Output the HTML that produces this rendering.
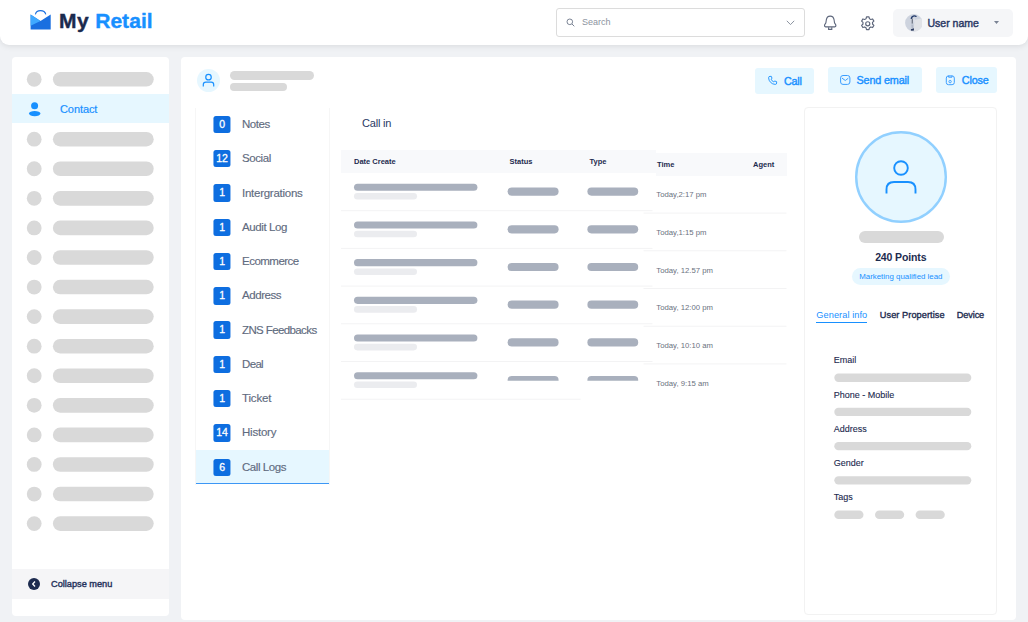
<!DOCTYPE html>
<html lang="en">
<head>
<meta charset="utf-8">
<title>My Retail</title>
<style>
*{box-sizing:border-box;margin:0;padding:0}
html,body{width:1028px;height:622px;overflow:hidden}
body{background:#f0f2f5;font-family:"Liberation Sans",sans-serif;color:#1d2b4f;position:relative}
.abs{position:absolute}
div,span,i,b{white-space:nowrap}
#hdr{position:absolute;left:0;top:0;width:1028px;height:45px;background:#fff;border-radius:0 0 9px 9px;box-shadow:0 1px 6px rgba(0,0,0,.1)}
#logo-txt{position:absolute;left:60px;top:8.5px;font-size:21px;font-weight:700;letter-spacing:.05px;-webkit-text-stroke:.4px currentColor;color:#1b2a4e;line-height:24px}
#logo-txt b{color:#1890ff}
#search{position:absolute;left:556px;top:8px;width:249px;height:29px;border:1px solid #dcdcdc;border-radius:3px;background:#fff}
#search span{position:absolute;left:25px;top:8.3px;font-size:9px;line-height:11px;color:#8c93a0}
#user{position:absolute;left:893px;top:8.5px;width:120px;height:28px;background:#f5f6f8;border-radius:5px}
#user span{position:absolute;left:34.5px;top:8.2px;font-size:10.5px;font-weight:400;-webkit-text-stroke:.45px currentColor;line-height:13px;color:#2d3b66}
#side{position:absolute;left:12px;top:57px;width:157px;height:559px;background:#fff;border-radius:4px;overflow:hidden}
.sc{position:absolute;left:15px;width:15px;height:15px;border-radius:50%;background:#d9d9d9}
.sb{position:absolute;left:41px;width:101px;height:15px;border-radius:8px;background:#d9d9d9}
#contact{position:absolute;left:0;top:37px;width:157px;height:29px;background:#e6f7ff}
#contact span{position:absolute;left:48px;top:8.6px;font-size:11px;line-height:13px;color:#1890ff;letter-spacing:-.08px;-webkit-text-stroke:.2px currentColor}
#collapse{position:absolute;left:0;top:512px;width:157px;height:30px;background:#f5f5f7}
#collapse span{position:absolute;left:39px;top:9.5px;font-size:9.2px;line-height:11px;color:#25335c;font-weight:400;-webkit-text-stroke:.4px currentColor}
#main{position:absolute;left:181px;top:57px;width:835px;height:563px;background:#fff;border-radius:4px}
.gb{position:absolute;background:#d9d9d9;border-radius:6px}
.btn{position:absolute;height:26px;background:#e6f7ff;border-radius:3px;color:#1890ff;font-size:10.8px;font-weight:400;-webkit-text-stroke:.4px currentColor;line-height:26px;letter-spacing:-.25px}
.btn span{position:absolute;top:0}
#tabs{position:absolute;left:15px;top:51px;width:133px;height:377px;box-shadow:-1px 0 0 #f6f6f6,1px 0 0 #f6f6f6}
.ti{position:absolute;left:0;width:133px;height:34px}
.ti i{position:absolute;left:17px;top:8.7px;width:17.3px;height:17.3px;transform:translate(.45px,0);background:#0e6ee0;border-radius:2.5px;color:#fff;font-style:normal;font-size:10.5px;line-height:17.5px;text-align:center;font-weight:400;-webkit-text-stroke:.3px #fff}
.ti span{position:absolute;left:46px;top:10.9px;font-size:11.5px;line-height:13px;color:#5f6b80;letter-spacing:-.3px;-webkit-text-stroke:.15px currentColor}
.ti.on{background:#e6f7ff;height:33.3px;box-shadow:0 1px 0 #3d97f5}
.th{position:absolute;background:#f8f9fb;height:23px}
.th span{position:absolute;top:7px;font-size:7.5px;line-height:9px;font-weight:700;color:#1d2b4f}
.ln{position:absolute;height:1px;background:#f4f4f5}
.d1{position:absolute;left:173px;width:124px;height:7px;border-radius:4px;background:#a9b0bd}
.d2{position:absolute;left:173px;width:63px;height:7px;border-radius:4px;background:#ebecef}
.p{position:absolute;width:51px;height:8px;border-radius:4px;background:#a9b0bd}
.tm{position:absolute;left:475.3px;font-size:7.75px;line-height:9px;color:#6b7280}
#rp{position:absolute;left:623.3px;top:50px;width:193px;height:508px;border:1px solid #f2f2f2;border-radius:4px;background:#fff}
.lb{position:absolute;left:28.5px;font-size:9px;line-height:11px;color:#1d2b4f;-webkit-text-stroke:.12px currentColor}
.rb{position:absolute;left:28.5px;width:137px;height:8.5px;border-radius:5px;background:#d9d9d9}
.rt{position:absolute;top:202px;font-size:9.2px;line-height:11px;font-weight:400;-webkit-text-stroke:.35px currentColor;color:#1d2b4f}
</style>
</head>
<body>
<div id="hdr">
<svg class="abs" style="left:30px;top:9px" width="22" height="22" viewBox="0 0 22 22"><path d="M0.6 5.6 L10.5 11.9 L20.7 5.6 L20.7 20.4 L0.6 20.4 Z" fill="#1a6fe0"/><path d="M0.6 5.6 L10.5 11.9 L0.6 16.8 Z" fill="#40a9ff"/><path d="M5.4 5.4 C6.5 0.4 14.5 0.4 15.8 5.4" fill="none" stroke="#1a6fe0" stroke-width="1.1"/></svg>
<div id="logo-txt"><span style="letter-spacing:.55px;margin-left:-1px">My</span> <b>Retail</b></div>
<div id="search">
<svg class="abs" style="left:9px;top:9px" width="9" height="9" viewBox="0 0 9 9"><circle cx="3.8" cy="3.8" r="2.8" fill="none" stroke="#7a8394" stroke-width="1"/><path d="M6 6 L8.3 8.3" stroke="#7a8394" stroke-width="1"/></svg>
<span>Search</span>
<svg class="abs" style="left:229px;top:11px" width="9" height="6" viewBox="0 0 9 6"><path d="M0.8 0.8 L4.5 4.6 L8.2 0.8" fill="none" stroke="#8c93a0" stroke-width="1"/></svg>
</div>
<svg class="abs" style="left:823px;top:14px" width="15" height="17" viewBox="0 0 15 17"><path d="M7.2 2.1 C3.8 2.1 3.5 4.6 3.3 6 L2.9 8.6 C2.7 9.7 1.5 10.2 1.5 11.4 C1.5 12.5 2.6 12.9 3.8 12.9 L10.6 12.9 C11.8 12.9 12.9 12.5 12.9 11.4 C12.9 10.2 11.7 9.7 11.5 8.6 L11.1 6 C10.9 4.6 10.6 2.1 7.2 2.1 Z" fill="none" stroke="#5d667b" stroke-width="1.1"/><path d="M5.6 13.2 L5.6 15.4 L8.8 15.4 L8.8 13.2" fill="none" stroke="#5d667b" stroke-width="1.1"/></svg>
<svg class="abs" style="left:859px;top:14.7px" width="17.5" height="17.5" viewBox="0 0 24 24"><path d="M10.3 2.5 h3.4 l.6 2.6 a7 7 0 0 1 1.9 1.1 l2.5-.8 1.7 3-1.9 1.8 a7 7 0 0 1 0 2.2 l1.9 1.8-1.7 3-2.5-.8 a7 7 0 0 1-1.9 1.1 l-.6 2.6 h-3.4 l-.6-2.6 a7 7 0 0 1-1.9-1.1 l-2.5.8-1.7-3 1.9-1.8 a7 7 0 0 1 0-2.2 l-1.9-1.8 1.7-3 2.5.8 a7 7 0 0 1 1.9-1.1 z" fill="none" stroke="#5d667b" stroke-width="1.6" stroke-linejoin="round"/><circle cx="12" cy="12" r="2.8" fill="none" stroke="#5d667b" stroke-width="1.6"/></svg>
<div id="user">
<svg class="abs" style="left:11.7px;top:5.6px" width="17.6" height="17.6" viewBox="0 0 17.6 17.6"><defs><clipPath id="av"><circle cx="8.8" cy="8.8" r="8.7"/></clipPath></defs><circle cx="8.8" cy="8.8" r="8.7" fill="#cdd3de"/><path clip-path="url(#av)" d="M9.5 6 L18 4 L18 18 L8.5 18 Z" fill="#e1e3e7"/><path d="M6.3 4.4 C6.8 2 9.5 1.3 11 2.3" fill="none" stroke="#233a6b" stroke-width="1.4" stroke-linecap="round"/><path d="M7.3 4.6 L7.2 9.6" stroke="#4b5160" stroke-width="0.9"/><path d="M7.8 5 L9.8 4.3 L10.2 7.5 L8.3 9 Z" fill="#dfe3ea" opacity=".7"/><path d="M5.8 15.2 L8.9 14.3 L9 16.6 L6.2 16.8 Z" fill="#2b3a5e"/><path d="M6.3 10.5 L8.2 10.5 L8.4 14 L6.6 14.3 Z" fill="#b3bac8"/></svg>
<span>User name</span>
<svg class="abs" style="left:100.5px;top:12.5px" width="5" height="3" viewBox="0 0 5 3"><path d="M0 0 L5 0 L2.5 3 Z" fill="#7a8394"/></svg>
</div>
</div>
<div id="side">
<svg class="abs" style="left:0;top:0" width="157" height="559" viewBox="12 57 157 559"><circle cx="34.2" cy="79.3" r="7.4" fill="#d9d9d9"/><rect x="52.9" y="72" width="100.8" height="14.6" rx="7.3" fill="#d9d9d9"/><circle cx="34.2" cy="139.2" r="7.4" fill="#d9d9d9"/><rect x="52.9" y="131.9" width="100.8" height="14.6" rx="7.3" fill="#d9d9d9"/><circle cx="34.2" cy="168.77" r="7.4" fill="#d9d9d9"/><rect x="52.9" y="161.47" width="100.8" height="14.6" rx="7.3" fill="#d9d9d9"/><circle cx="34.2" cy="198.34" r="7.4" fill="#d9d9d9"/><rect x="52.9" y="191.04" width="100.8" height="14.6" rx="7.3" fill="#d9d9d9"/><circle cx="34.2" cy="227.91" r="7.4" fill="#d9d9d9"/><rect x="52.9" y="220.61" width="100.8" height="14.6" rx="7.3" fill="#d9d9d9"/><circle cx="34.2" cy="257.48" r="7.4" fill="#d9d9d9"/><rect x="52.9" y="250.18" width="100.8" height="14.6" rx="7.3" fill="#d9d9d9"/><circle cx="34.2" cy="287.05" r="7.4" fill="#d9d9d9"/><rect x="52.9" y="279.75" width="100.8" height="14.6" rx="7.3" fill="#d9d9d9"/><circle cx="34.2" cy="316.62" r="7.4" fill="#d9d9d9"/><rect x="52.9" y="309.32" width="100.8" height="14.6" rx="7.3" fill="#d9d9d9"/><circle cx="34.2" cy="346.19" r="7.4" fill="#d9d9d9"/><rect x="52.9" y="338.89" width="100.8" height="14.6" rx="7.3" fill="#d9d9d9"/><circle cx="34.2" cy="375.76" r="7.4" fill="#d9d9d9"/><rect x="52.9" y="368.46" width="100.8" height="14.6" rx="7.3" fill="#d9d9d9"/><circle cx="34.2" cy="405.33" r="7.4" fill="#d9d9d9"/><rect x="52.9" y="398.03" width="100.8" height="14.6" rx="7.3" fill="#d9d9d9"/><circle cx="34.2" cy="434.9" r="7.4" fill="#d9d9d9"/><rect x="52.9" y="427.6" width="100.8" height="14.6" rx="7.3" fill="#d9d9d9"/><circle cx="34.2" cy="464.47" r="7.4" fill="#d9d9d9"/><rect x="52.9" y="457.17" width="100.8" height="14.6" rx="7.3" fill="#d9d9d9"/><circle cx="34.2" cy="494.04" r="7.4" fill="#d9d9d9"/><rect x="52.9" y="486.74" width="100.8" height="14.6" rx="7.3" fill="#d9d9d9"/><circle cx="34.2" cy="523.61" r="7.4" fill="#d9d9d9"/><rect x="52.9" y="516.31" width="100.8" height="14.6" rx="7.3" fill="#d9d9d9"/></svg>
<div id="contact">
<svg class="abs" style="left:15.7px;top:7.4px" width="14" height="16" viewBox="0 0 14 16"><circle cx="6.6" cy="4.8" r="3.5" fill="#1890ff"/><ellipse cx="6.7" cy="12.6" rx="5.7" ry="2.7" fill="#1890ff"/></svg>
<span>Contact</span></div>
<div id="collapse">
<svg class="abs" style="left:15.5px;top:9px" width="12" height="12" viewBox="0 0 12 12"><circle cx="6" cy="6" r="6" fill="#1d2b4f"/><path d="M7 3.5 L4.7 6 L7 8.5" fill="none" stroke="#fff" stroke-width="1.3"/></svg>
<span>Collapse menu</span></div>
</div>
<div id="main">
<svg class="abs" style="left:16px;top:11.5px" width="23" height="23" viewBox="0 0 23 23"><circle cx="11.5" cy="11.5" r="11.5" fill="#e6f7ff"/><circle cx="11.5" cy="8.2" r="2.75" fill="none" stroke="#1890ff" stroke-width="1.2"/><path d="M6.3 17.6 L6.3 15.6 Q6.3 13.2 8.8 13.2 L14.2 13.2 Q16.7 13.2 16.7 15.6 L16.7 17.6" fill="none" stroke="#1890ff" stroke-width="1.2"/></svg>
<div class="gb" style="left:49px;top:14.3px;width:84px;height:8.8px"></div>
<div class="gb" style="left:49px;top:25.9px;width:57px;height:8.3px"></div>
<div class="btn" style="left:574px;top:11px;width:59px">
<svg class="abs" style="left:12px;top:7px" width="11" height="11" viewBox="0 0 24 24"><path d="M6.5 3 L9.5 3 L11 7.5 L8.8 9.2 A12 12 0 0 0 14.8 15.2 L16.5 13 L21 14.5 L21 17.5 A3 3 0 0 1 18 20.5 A15 15 0 0 1 3.5 6 A3 3 0 0 1 6.5 3 Z" fill="none" stroke="#1890ff" stroke-width="2" stroke-linejoin="round"/></svg>
<span style="left:29px;top:-.5px">Call</span></div>
<div class="btn" style="left:647px;top:10px;width:94px">
<svg class="abs" style="left:12px;top:7px" width="11" height="12" viewBox="0 0 11 12"><rect x="0.6" y="1.5" width="9.3" height="8.9" rx="2.4" fill="none" stroke="#3a9dff" stroke-width="1"/><path d="M2 4.1 L5.3 6.5 L8.3 4.2" fill="none" stroke="#3a9dff" stroke-width="1"/></svg>
<span style="left:28.5px;top:.2px;letter-spacing:-.15px">Send email</span></div>
<div class="btn" style="left:755px;top:10px;width:61px">
<svg class="abs" style="left:9px;top:7px" width="11" height="12" viewBox="0 0 11 12"><rect x="1.3" y="1.9" width="8" height="8.8" rx="2.2" fill="none" stroke="#3a9dff" stroke-width="1"/><path d="M3.6 1.7 L3.6 3.2 L7 3.2 L7 1.7" fill="none" stroke="#3a9dff" stroke-width="1"/><circle cx="5.1" cy="7.6" r="1.2" fill="none" stroke="#3a9dff" stroke-width="0.9"/></svg>
<span style="left:25.8px;top:.2px;letter-spacing:-.15px">Close</span></div>
<div id="tabs">
<div class="ti" style="top:-0.8px"><i>0</i><span style="letter-spacing:-0.45px">Notes</span></div>
<div class="ti" style="top:33.5px"><i>12</i><span style="letter-spacing:-0.4px">Social</span></div>
<div class="ti" style="top:67.7px"><i>1</i><span style="letter-spacing:-0.26px">Intergrations</span></div>
<div class="ti" style="top:102px"><i>1</i><span style="letter-spacing:-0.39px">Audit Log</span></div>
<div class="ti" style="top:136.3px"><i>1</i><span style="letter-spacing:-0.52px">Ecommerce</span></div>
<div class="ti" style="top:170.6px"><i>1</i><span style="letter-spacing:-0.44px">Address</span></div>
<div class="ti" style="top:204.8px"><i>1</i><span style="letter-spacing:-0.61px">ZNS Feedbacks</span></div>
<div class="ti" style="top:239.1px"><i>1</i><span style="letter-spacing:-0.66px">Deal</span></div>
<div class="ti" style="top:273.4px"><i>1</i><span style="letter-spacing:-0.16px">Ticket</span></div>
<div class="ti" style="top:307.6px"><i>14</i><span style="letter-spacing:-0.23px">History</span></div>
<div class="ti on" style="top:341.9px"><i>6</i><span style="letter-spacing:-0.44px">Call Logs</span></div>
</div>
<div class="abs" style="left:181px;top:59.5px;font-size:11px;line-height:13px;color:#2a3963;letter-spacing:-.2px">Call in</div>
<div class="th" style="left:160px;top:93px;width:315px"><span style="left:13px">Date Create</span><span style="left:168.5px">Status</span><span style="left:248.5px">Type</span></div>
<div class="th" style="left:475px;top:96px;width:131px"><span style="left:1px;top:6.5px">Time</span><span style="left:97px;top:6.5px">Agent</span></div>
<svg class="abs" style="left:150px;top:110px" width="470" height="250" viewBox="331 167 470 250"><defs><clipPath id="cl"><rect x="331" y="167" width="470" height="213.8"/></clipPath></defs><rect x="354" y="183.7" width="123.4" height="7.1" rx="3.55" fill="#a9b0bd"/><rect x="354" y="193" width="63" height="6.6" rx="3.3" fill="#ebecef"/><rect x="507.6" y="187.5" width="51" height="8.2" rx="4.1" fill="#a9b0bd"/><rect x="587.4" y="187.5" width="50.8" height="8.2" rx="4.1" fill="#a9b0bd"/><rect x="341" y="210.2" width="311.5" height="1" fill="#f3f3f4"/><rect x="643.5" y="212.6" width="143" height="1" fill="#f3f3f4"/><rect x="354" y="221.4" width="123.4" height="7.1" rx="3.55" fill="#a9b0bd"/><rect x="354" y="230.7" width="63" height="6.6" rx="3.3" fill="#ebecef"/><rect x="507.6" y="225.2" width="51" height="8.2" rx="4.1" fill="#a9b0bd"/><rect x="587.4" y="225.2" width="50.8" height="8.2" rx="4.1" fill="#a9b0bd"/><rect x="341" y="247.9" width="311.5" height="1" fill="#f3f3f4"/><rect x="643.5" y="250.3" width="143" height="1" fill="#f3f3f4"/><rect x="354" y="259.1" width="123.4" height="7.1" rx="3.55" fill="#a9b0bd"/><rect x="354" y="268.4" width="63" height="6.6" rx="3.3" fill="#ebecef"/><rect x="507.6" y="262.9" width="51" height="8.2" rx="4.1" fill="#a9b0bd"/><rect x="587.4" y="262.9" width="50.8" height="8.2" rx="4.1" fill="#a9b0bd"/><rect x="341" y="285.6" width="311.5" height="1" fill="#f3f3f4"/><rect x="643.5" y="288" width="143" height="1" fill="#f3f3f4"/><rect x="354" y="296.8" width="123.4" height="7.1" rx="3.55" fill="#a9b0bd"/><rect x="354" y="306.1" width="63" height="6.6" rx="3.3" fill="#ebecef"/><rect x="507.6" y="300.6" width="51" height="8.2" rx="4.1" fill="#a9b0bd"/><rect x="587.4" y="300.6" width="50.8" height="8.2" rx="4.1" fill="#a9b0bd"/><rect x="341" y="323.3" width="311.5" height="1" fill="#f3f3f4"/><rect x="643.5" y="325.7" width="143" height="1" fill="#f3f3f4"/><rect x="354" y="334.5" width="123.4" height="7.1" rx="3.55" fill="#a9b0bd"/><rect x="354" y="343.8" width="63" height="6.6" rx="3.3" fill="#ebecef"/><rect x="507.6" y="338.3" width="51" height="8.2" rx="4.1" fill="#a9b0bd"/><rect x="587.4" y="338.3" width="50.8" height="8.2" rx="4.1" fill="#a9b0bd"/><rect x="341" y="361" width="311.5" height="1" fill="#f3f3f4"/><rect x="643.5" y="363.4" width="143" height="1" fill="#f3f3f4"/><rect x="354" y="372.2" width="123.4" height="7.1" rx="3.55" fill="#a9b0bd"/><rect x="354" y="381.5" width="63" height="6.6" rx="3.3" fill="#ebecef"/><rect x="507.6" y="376" width="51" height="8.2" rx="4.1" fill="#a9b0bd" clip-path="url(#cl)"/><rect x="587.4" y="376" width="50.8" height="8.2" rx="4.1" fill="#a9b0bd" clip-path="url(#cl)"/><rect x="341" y="398.7" width="239.6" height="1" fill="#f3f3f4"/></svg>
<div class="tm" style="top:133.3px">Today,2:17 pm</div>
<div class="tm" style="top:171px">Today,1:15 pm</div>
<div class="tm" style="top:208.7px">Today, 12.57 pm</div>
<div class="tm" style="top:246.4px">Today, 12:00 pm</div>
<div class="tm" style="top:284.1px">Today, 10:10 am</div>
<div class="tm" style="top:321.8px">Today, 9:15 am</div>

<div id="rp">
<svg class="abs" style="left:49px;top:22px" width="94" height="94" viewBox="0 0 94 94"><circle cx="47" cy="47" r="44.8" fill="#e6f7ff" stroke="#91d0ff" stroke-width="2.4"/><circle cx="47" cy="38" r="6.8" fill="none" stroke="#1890ff" stroke-width="1.9"/><path d="M32.5 63.5 L32.5 59.5 Q32.5 52 40 52 L54 52 Q61.5 52 61.5 59.5 L61.5 63.5" fill="none" stroke="#1890ff" stroke-width="1.9"/></svg>
<div class="gb" style="left:53.8px;top:123px;width:84.5px;height:12px"></div>
<div class="abs" style="left:0;top:143px;width:191px;text-align:center;font-size:10.5px;line-height:13px;font-weight:700;letter-spacing:-.12px;color:#1d2b4f">240 Points</div>
<div class="abs" style="left:46.8px;top:160px;width:97.5px;height:17px;border-radius:9px;background:#e6f7ff;text-align:center;font-size:7.9px;line-height:17px;color:#1890ff">Marketing qualified lead</div>
<div class="rt" style="left:11px;-webkit-text-stroke:0;color:#1890ff;border-bottom:1px solid #1890ff;height:13px;letter-spacing:.08px">General info</div>
<div class="rt" style="left:74.5px;letter-spacing:.07px">User Propertise</div>
<div class="rt" style="left:151.5px;letter-spacing:-.13px">Device</div>
<div class="lb" style="top:247.4px">Email</div>
<div class="lb" style="top:281.6px">Phone - Mobile</div>
<div class="lb" style="top:315.8px">Address</div>
<div class="lb" style="top:350px">Gender</div>
<div class="lb" style="top:384.2px">Tags</div>
<svg class="abs" style="left:20px;top:260px" width="160" height="160" viewBox="824.5 368 160 160"><rect x="833.8" y="373.6" width="137" height="8.3" rx="4.15" fill="#d9d9d9"/><rect x="833.8" y="407.8" width="137" height="8.3" rx="4.15" fill="#d9d9d9"/><rect x="833.8" y="442" width="137" height="8.3" rx="4.15" fill="#d9d9d9"/><rect x="833.8" y="476.2" width="137" height="8.3" rx="4.15" fill="#d9d9d9"/><rect x="833.8" y="510.4" width="29.2" height="8.6" rx="4.3" fill="#d9d9d9"/><rect x="874.5" y="510.4" width="29.2" height="8.6" rx="4.3" fill="#d9d9d9"/><rect x="915.1" y="510.4" width="29.2" height="8.6" rx="4.3" fill="#d9d9d9"/></svg>
</div>
</div>
</body>
</html>
